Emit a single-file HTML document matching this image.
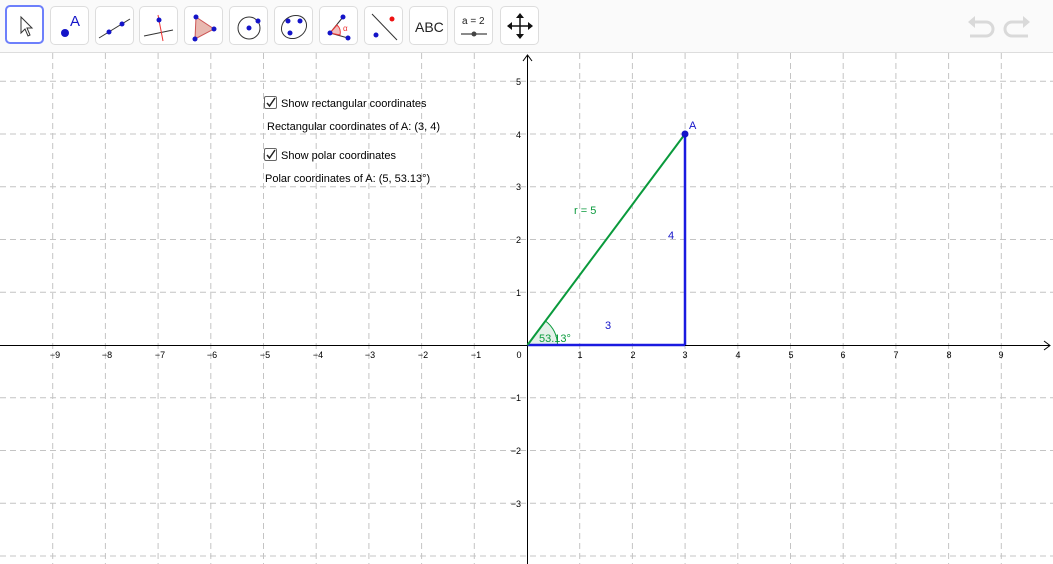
<!DOCTYPE html>
<html><head><style>
body{margin:0;width:1053px;height:564px;overflow:hidden;background:#fff;font-family:"Liberation Sans",sans-serif;position:relative}
.tb{position:absolute;left:0;top:0;width:1053px;height:52px;background:#fafafa;border-bottom:1px solid #ddd}
.b{position:absolute;top:6px;width:37px;height:37px;border:1px solid #ddd;border-radius:5px;background:#fff}
.b svg{position:absolute;left:0;top:0}
.sel{border:2px solid #6d7ffb;top:5px;width:35px;height:35px}
.t{position:absolute;font-size:11px;color:#000;white-space:nowrap}
.cb{display:inline-block;width:11px;height:11px;border:1px solid #666;border-radius:2px;vertical-align:-2px;margin-right:4px;position:relative;background:#fff}
</style></head><body>
<svg width="1053" height="564" style="position:absolute;left:0;top:0">
<g stroke="#c4c4c4" stroke-dasharray="6,4" stroke-width="1">
<line x1="52.7" y1="53" x2="52.7" y2="564"/><line x1="105.4" y1="53" x2="105.4" y2="564"/><line x1="158.1" y1="53" x2="158.1" y2="564"/><line x1="210.8" y1="53" x2="210.8" y2="564"/><line x1="263.5" y1="53" x2="263.5" y2="564"/><line x1="316.2" y1="53" x2="316.2" y2="564"/><line x1="368.9" y1="53" x2="368.9" y2="564"/><line x1="421.6" y1="53" x2="421.6" y2="564"/><line x1="474.3" y1="53" x2="474.3" y2="564"/><line x1="579.7" y1="53" x2="579.7" y2="564"/><line x1="632.4" y1="53" x2="632.4" y2="564"/><line x1="737.8" y1="53" x2="737.8" y2="564"/><line x1="790.5" y1="53" x2="790.5" y2="564"/><line x1="843.2" y1="53" x2="843.2" y2="564"/><line x1="895.9" y1="53" x2="895.9" y2="564"/><line x1="948.6" y1="53" x2="948.6" y2="564"/><line x1="1001.3" y1="53" x2="1001.3" y2="564"/><line x1="685.1" y1="53" x2="685.1" y2="564"/>
<line x1="0" y1="81.25" x2="1053" y2="81.25"/><line x1="0" y1="134" x2="1053" y2="134"/><line x1="0" y1="186.75" x2="1053" y2="186.75"/><line x1="0" y1="239.5" x2="1053" y2="239.5"/><line x1="0" y1="292.25" x2="1053" y2="292.25"/><line x1="0" y1="397.75" x2="1053" y2="397.75"/><line x1="0" y1="450.5" x2="1053" y2="450.5"/><line x1="0" y1="503.25" x2="1053" y2="503.25"/><line x1="0" y1="556" x2="1053" y2="556"/>
</g>
<g stroke="#000" stroke-width="1">
<line x1="0" y1="345.5" x2="1050" y2="345.5"/><line x1="527.5" y1="56" x2="527.5" y2="564"/>
<path d="M1044 341 L1050 345.5 L1044 350" fill="none"/><path d="M523 61 L527.5 55 L532 61" fill="none"/>
</g>
<g font-size="9" fill="#000" font-family="Liberation Sans,sans-serif" text-anchor="middle">
<text x="55" y="358">−9</text><text x="107" y="358">−8</text><text x="160" y="358">−7</text><text x="212" y="358">−6</text><text x="265" y="358">−5</text><text x="318" y="358">−4</text><text x="370" y="358">−3</text><text x="423" y="358">−2</text><text x="476" y="358">−1</text><text x="519" y="358">0</text><text x="580" y="358">1</text><text x="633" y="358">2</text><text x="685" y="358">3</text><text x="738" y="358">4</text><text x="791" y="358">5</text><text x="843" y="358">6</text><text x="896" y="358">7</text><text x="949" y="358">8</text><text x="1001" y="358">9</text>
</g>
<g font-size="9" fill="#000" font-family="Liberation Sans,sans-serif" text-anchor="end">
<text x="521" y="85">5</text><text x="521" y="138">4</text><text x="521" y="190">3</text><text x="521" y="243">2</text><text x="521" y="296">1</text><text x="521" y="401">−1</text><text x="521" y="454">−2</text><text x="521" y="507">−3</text>
</g>
<path d="M527.5 345 L545.5 321 A30 30 0 0 1 557.5 345 Z" fill="rgba(0,120,40,0.1)" stroke="none"/>
<path d="M545.5 321 A30 30 0 0 1 557.5 345" fill="none" stroke="#0a9a3c" stroke-width="1"/>
<line x1="527.5" y1="345" x2="685" y2="345" stroke="#1a1ae0" stroke-width="2.5"/>
<line x1="685" y1="345" x2="685" y2="134" stroke="#1a1ae0" stroke-width="2.5"/>
<line x1="527.5" y1="345" x2="685" y2="134" stroke="#0a9a3c" stroke-width="2"/>
<circle cx="685" cy="134" r="3.5" fill="#1414c8"/>
<text x="689" y="129" font-size="11" fill="#1414c8">A</text>
<text x="574" y="214" font-size="11" fill="#0a9a3c">r = 5</text>
<text x="668" y="239" font-size="11" fill="#1414c8">4</text>
<text x="605" y="329" font-size="11" fill="#1414c8">3</text>
<text x="539" y="342" font-size="11" fill="#0a9a3c">53.13°</text>
</svg>
<div class="t" style="left:264px;top:96px"><span class="cb"><svg width="11" height="11" style="position:absolute;left:0;top:0"><path d="M2 6 L4.5 9 L10 1" fill="none" stroke="#222" stroke-width="1.5"/></svg></span>Show rectangular coordinates</div>
<div class="t" style="left:267px;top:121px">Rectangular coordinates of A: (3, 4)</div>
<div class="t" style="left:264px;top:148px"><span class="cb"><svg width="11" height="11" style="position:absolute;left:0;top:0"><path d="M2 6 L4.5 9 L10 1" fill="none" stroke="#222" stroke-width="1.5"/></svg></span>Show polar coordinates</div>
<div class="t" style="left:265px;top:173px">Polar coordinates of A: (5, 53.13°)</div>
<div class="tb">
<div class="b sel" style="left:5px"><svg width="35" height="35"><path d="M14 10 L14 26 L18 22 L21 29 L23 28 L20 21 L25 21 Z" fill="#fff" stroke="#333" stroke-width="1"/></svg></div>
<div class="b" style="left:50px"><svg width="37" height="37"><circle cx="14" cy="26" r="4" fill="#1414c8"/><text x="19" y="19" font-size="15" fill="#1414c8" font-family="Liberation Sans,sans-serif">A</text></svg></div>
<div class="b" style="left:95px"><svg width="37" height="37"><line x1="3" y1="31" x2="34" y2="12" stroke="#333"/><circle cx="13" cy="25" r="2.5" fill="#1414c8"/><circle cx="26" cy="17" r="2.5" fill="#1414c8"/></svg></div>
<div class="b" style="left:139px"><svg width="37" height="37"><line x1="4" y1="29" x2="33" y2="23" stroke="#333"/><line x1="18" y1="8" x2="23" y2="34" stroke="#e33"/><circle cx="19" cy="13" r="2.5" fill="#1414c8"/></svg></div>
<div class="b" style="left:184px"><svg width="37" height="37"><path d="M11 10 L29 22 L10 32 Z" fill="#e8b8b0" stroke="#c55"/><circle cx="11" cy="10" r="2.5" fill="#1414c8"/><circle cx="29" cy="22" r="2.5" fill="#1414c8"/><circle cx="10" cy="32" r="2.5" fill="#1414c8"/></svg></div>
<div class="b" style="left:229px"><svg width="37" height="37"><circle cx="19" cy="21" r="11" fill="none" stroke="#333"/><circle cx="19" cy="21" r="2.5" fill="#1414c8"/><circle cx="28" cy="14" r="2.5" fill="#1414c8"/></svg></div>
<div class="b" style="left:274px"><svg width="37" height="37"><ellipse cx="19" cy="20" rx="13" ry="11" fill="none" stroke="#333" transform="rotate(-30 19 20)"/><circle cx="13" cy="14" r="2.5" fill="#1414c8"/><circle cx="25" cy="14" r="2.5" fill="#1414c8"/><circle cx="15" cy="26" r="2.5" fill="#1414c8"/></svg></div>
<div class="b" style="left:319px"><svg width="37" height="37"><path d="M10 26 L23 10 M10 26 L28 31" stroke="#333" fill="none"/><path d="M10 26 L17 18 A10 10 0 0 1 20 28 Z" fill="#f0c0c0" stroke="#e33"/><text x="23" y="24" font-size="8" fill="#e33">α</text><circle cx="10" cy="26" r="2.5" fill="#1414c8"/><circle cx="23" cy="10" r="2.5" fill="#1414c8"/><circle cx="28" cy="31" r="2.5" fill="#1414c8"/></svg></div>
<div class="b" style="left:364px"><svg width="37" height="37"><line x1="7" y1="7" x2="32" y2="33" stroke="#333"/><circle cx="27" cy="12" r="2.5" fill="#e11"/><circle cx="11" cy="28" r="2.5" fill="#1414c8"/></svg></div>
<div class="b" style="left:409px"><svg width="37" height="37"><text x="5" y="25" font-size="14" fill="#222" font-family="Liberation Sans,sans-serif">ABC</text></svg></div>
<div class="b" style="left:454px"><svg width="37" height="37"><text x="7" y="17" font-size="10" fill="#222" font-family="Liberation Sans,sans-serif">a = 2</text><line x1="6" y1="27" x2="32" y2="27" stroke="#444" stroke-width="1.2"/><circle cx="19" cy="27" r="2.5" fill="#444"/></svg></div>
<div class="b" style="left:500px"><svg width="37" height="37"><path d="M19 8 L19 30 M8 19 L30 19" stroke="#111" stroke-width="1.5"/><path d="M19 6 L15 11 L23 11Z M19 32 L15 27 L23 27Z M6 19 L11 15 L11 23Z M32 19 L27 15 L27 23Z" fill="#111"/></svg></div>
<svg width="80" height="40" style="position:absolute;left:960px;top:6px"><path d="M14 16 L26 16 A7 7 0 0 1 26 30 L10 30" fill="none" stroke="#d9d9d9" stroke-width="3"/><path d="M8 16 L15 10 L15 22Z" fill="#d9d9d9"/><path d="M64 16 L52 16 A7 7 0 0 0 52 30 L68 30" fill="none" stroke="#d9d9d9" stroke-width="3"/><path d="M70 16 L63 10 L63 22Z" fill="#d9d9d9"/></svg>
</div>
</body></html>
